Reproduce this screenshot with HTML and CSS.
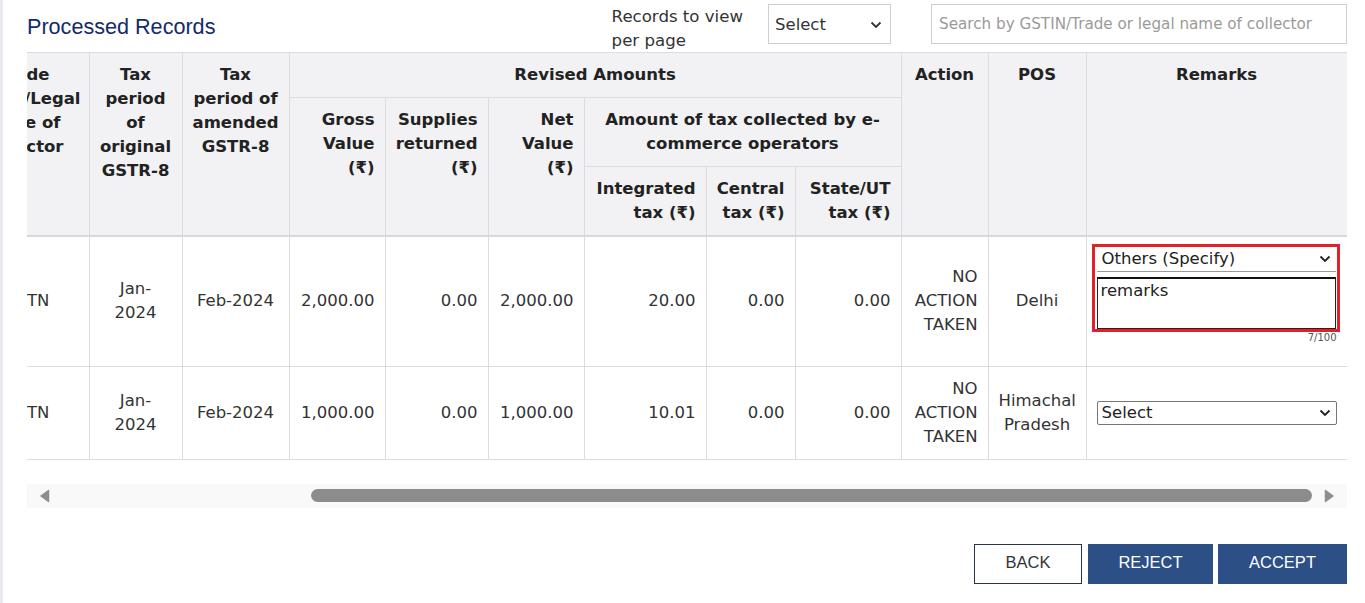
FILE: index.html
```html
<!DOCTYPE html>
<html lang="en">
<head>
<meta charset="utf-8">
<title>Processed Records</title>
<link rel="stylesheet" href="styles.css">
</head>
<body>
<div class="page">
  <div class="topbar">
    <h1 class="title">Processed Records</h1>
    <div class="perpage">Records to view<br>per page</div>
    <div class="select-box">
      <span>Select</span>
      <svg class="chev" width="12" height="8" viewBox="0 0 12 8"><path d="M1.5 1.5 L6 6 L10.5 1.5" fill="none" stroke="#333" stroke-width="1.8"/></svg>
    </div>
    <div class="search">Search by GSTIN/Trade or legal name of collector</div>
  </div>

  <div class="viewport">
    <table class="grid">
      <colgroup>
        <col class="w62"><col class="w93"><col class="w107"><col class="w96"><col class="w103"><col class="w96">
        <col class="w122"><col class="w89"><col class="w106"><col class="w87"><col class="w98"><col class="w261">
      </colgroup>
      <thead>
        <tr>
          <th rowspan="3" class="c1">
            <div class="cut cut-a">Trade</div>
            <div class="cut cut-b">/Legal</div>
            <div class="cut cut-c">name of</div>
            <div class="cut cut-d">collector</div>
          </th>
          <th rowspan="3">Tax period of original GSTR-8</th>
          <th rowspan="3">Tax period of amended GSTR-8</th>
          <th colspan="6">Revised Amounts</th>
          <th rowspan="3">Action</th>
          <th rowspan="3">POS</th>
          <th rowspan="3">Remarks</th>
        </tr>
        <tr>
          <th rowspan="2" class="r">Gross Value (₹)</th>
          <th rowspan="2" class="r">Supplies returned (₹)</th>
          <th rowspan="2" class="r">Net Value (₹)</th>
          <th colspan="3">Amount of tax collected by e-commerce operators</th>
        </tr>
        <tr>
          <th class="r">Integrated tax (₹)</th>
          <th class="r">Central tax (₹)</th>
          <th class="r">State/UT tax (₹)</th>
        </tr>
      </thead>
      <tbody>
        <tr class="tall">
          <td class="c1 tn">TN</td>
          <td class="c">Jan-2024</td>
          <td class="c">Feb-2024</td>
          <td class="r">2,000.00</td>
          <td class="r">0.00</td>
          <td class="r">2,000.00</td>
          <td class="r">20.00</td>
          <td class="r">0.00</td>
          <td class="r">0.00</td>
          <td class="r">NO ACTION TAKEN</td>
          <td class="c">Delhi</td>
          <td class="remarks top">
            <div class="hl">
              <div class="sel flat">
                <span>Others (Specify)</span>
                <svg class="chev" width="12" height="8" viewBox="0 0 12 8"><path d="M1.5 1.5 L6 6 L10.5 1.5" fill="none" stroke="#222" stroke-width="1.8"/></svg>
              </div>
              <div class="ta">remarks</div>
            </div>
            <div class="count">7/100</div>
          </td>
        </tr>
        <tr>
          <td class="c1 tn">TN</td>
          <td class="c">Jan-2024</td>
          <td class="c">Feb-2024</td>
          <td class="r">1,000.00</td>
          <td class="r">0.00</td>
          <td class="r">1,000.00</td>
          <td class="r">10.01</td>
          <td class="r">0.00</td>
          <td class="r">0.00</td>
          <td class="r">NO ACTION TAKEN</td>
          <td class="c">Himachal Pradesh</td>
          <td class="remarks">
            <div class="sel boxed">
              <span>Select</span>
              <svg class="chev" width="12" height="8" viewBox="0 0 12 8"><path d="M1.5 1.5 L6 6 L10.5 1.5" fill="none" stroke="#222" stroke-width="1.8"/></svg>
            </div>
          </td>
        </tr>
      </tbody>
    </table>
  </div>

  <div class="hscroll">
    <svg class="arrow" width="11" height="14" viewBox="0 0 11 14"><path d="M9.5 1.5 L9.5 12.5 L2 7 Z" fill="#8e8e8e" stroke="#8e8e8e" stroke-width="1.5" stroke-linejoin="round"/></svg>
    <div class="track"><div class="thumb" style="margin-left:261px;width:1001px"></div></div>
    <svg class="arrow" width="11" height="14" viewBox="0 0 11 14"><path d="M1.5 1.5 L1.5 12.5 L9 7 Z" fill="#8e8e8e" stroke="#8e8e8e" stroke-width="1.5" stroke-linejoin="round"/></svg>
  </div>

  <div class="actions">
    <button class="btn btn-back">BACK</button>
    <button class="btn btn-primary btn-reject">REJECT</button>
    <button class="btn btn-primary btn-accept">ACCEPT</button>
  </div>
</div>
</body>
</html>
```
FILE: styles.css
```css
* { box-sizing: border-box; }
html, body { margin: 0; padding: 0; background: #fff; }
body {
  font-family: "DejaVu Sans", Verdana, sans-serif;
  color: #333;
}
.page {
  border-left: 3px solid #e7e9ee;
  min-height: 603px;
  padding: 0 18px 0 24px;
}

/* top bar */
.topbar {
  display: flex;
  align-items: flex-start;
  height: 52px;
  padding-top: 4px;
}
.title {
  flex: 1;
  margin: 0;
  padding-top: 11px;
  font-family: "Liberation Sans", Arial, sans-serif;
  font-weight: normal;
  font-size: 21.6px;
  line-height: 24px;
  color: #142a6a;
}
.perpage {
  font-size: 16.6px;
  line-height: 24px;
  padding-top: 1px;
  color: #333;
  margin-right: 25px;
}
.select-box {
  width: 123px;
  height: 40px;
  border: 1px solid #cfcfcf;
  display: flex;
  align-items: center;
  justify-content: space-between;
  padding: 1px 8px 0 6px;
  font-size: 16.5px;
  color: #333;
  margin-right: 40px;
}
.search {
  width: 416px;
  height: 40px;
  border: 1px solid #cfcfcf;
  padding-left: 7px;
  font-size: 15.2px;
  line-height: 39px;
  color: #9a9a9a;
  white-space: nowrap;
  overflow: hidden;
}

/* table */
.viewport {
  width: 1320px;
  overflow: hidden;
}
.grid {
  width: 1320px;
  table-layout: fixed;
  border-collapse: collapse;
  font-size: 16.5px;
  line-height: 24px;
}
.w62 { width: 62px; }
.w93 { width: 93px; }
.w107 { width: 107px; }
.w96 { width: 96px; }
.w103 { width: 103px; }
.w122 { width: 122px; }
.w89 { width: 89px; }
.w106 { width: 106px; }
.w87 { width: 87px; }
.w98 { width: 98px; }
.w261 { width: 261px; }

.grid th, .grid td {
  border: 1px solid #dcdcdc;
  padding: 10px;
}
.grid th {
  background: #f2f2f4;
  color: #222;
  font-weight: bold;
  vertical-align: top;
  text-align: center;
}
.grid th.r { text-align: right; }
.grid td {
  vertical-align: middle;
  color: #333;
}
.grid td.r { text-align: right; }
.grid td.c { text-align: center; }
.grid .c1 {
  border-left: none;
  padding-left: 0;
  padding-right: 0;
}
.grid td.tn {
  text-align: right;
  padding-right: 43px;
}
.grid tbody tr:first-child td { border-top: 2px solid #d8d8d8; }
.grid tr.tall { height: 130px; }

.cut {
  display: flex;
  justify-content: flex-end;
  white-space: nowrap;
  overflow: hidden;
}
.cut-a { padding-right: 39px; }
.cut-b { padding-right: 8px; }
.cut-c { padding-right: 28px; }
.cut-d { padding-right: 25px; }

/* remarks */
.grid td.remarks { padding: 10px; }
.grid td.top { vertical-align: top; }
.hl {
  border: 3px solid #e2202a;
  margin: -3px -3px 0 -5px;
  padding: 0 1px 0 2px;
}
.sel {
  display: flex;
  align-items: center;
  justify-content: space-between;
  font-size: 16.5px;
  color: #222;
}
.sel.flat {
  height: 25px;
  padding: 0 5px 0 5px;
  border-bottom: 1px solid #9a9a9a;
}
.sel.boxed {
  height: 24px;
  border: 1px solid #767676;
  border-radius: 2px;
  padding: 0 5px 0 4px;
}
.ta {
  margin-top: 5px;
  height: 52px;
  border: 1px solid #222;
  border-top: 2px solid #111;
  padding: 0 3px;
  font-size: 16.5px;
  line-height: 24px;
  color: #222;
}
.count {
  text-align: right;
  font-size: 10px;
  line-height: 10px;
  color: #555;
  margin-top: 1px;
}

/* scrollbar */
.hscroll {
  margin-top: 24px;
  width: 1320px;
  height: 24px;
  background: #f9f9f9;
  display: flex;
  align-items: center;
  padding: 0 12px;
}
.arrow { flex: none; }
.track { flex: 1; display: flex; align-items: center; }
.thumb {
  height: 13px;
  border-radius: 7px;
  background: #8c8c8c;
}

/* buttons */
.actions {
  margin-top: 36px;
  width: 1320px;
  display: flex;
  justify-content: flex-end;
  gap: 6px;
}
.btn {
  height: 40px;
  font-family: "Liberation Sans", Arial, sans-serif;
  font-size: 16.5px;
  border: 1px solid #2c4f86;
  padding: 0 0 2px;
  cursor: pointer;
}
.btn-back {
  width: 108px;
  background: #fff;
  color: #333;
  border-color: #253447;
}
.btn-primary {
  background: #2c4f86;
  color: #fff;
}
.btn-reject { width: 125px; }
.btn-accept { width: 129px; margin-left: -1px; }
```
